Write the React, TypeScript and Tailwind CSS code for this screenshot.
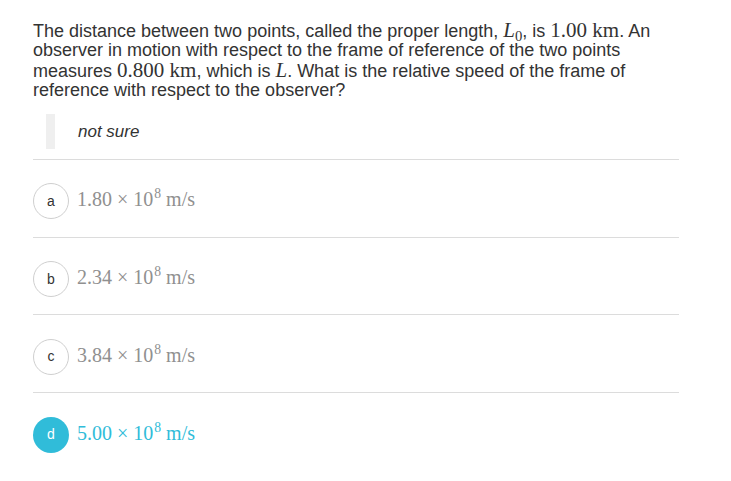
import React from "react";

const serif = "font-['Liberation_Serif','DejaVu_Serif',serif]";

function Sup({ children }: { children: React.ReactNode }) {
  return <sup className="relative -top-[0.6em] ml-[1px] align-baseline text-[0.68em] leading-none">{children}</sup>;
}

function Speed({ value }: { value: string }) {
  return (
    <span className={`${serif} text-[20px] leading-none`}>
      {value}
      <span className="mx-[5px]">×</span>
      10
      <Sup>8</Sup>
      <span className="ml-[5px]">m/s</span>
    </span>
  );
}

const options = [
  { key: "a", value: "1.80", selected: false },
  { key: "b", value: "2.34", selected: false },
  { key: "c", value: "3.84", selected: false },
  { key: "d", value: "5.00", selected: true },
];

export default function App() {
  return (
    <div className="min-h-screen bg-white font-['Liberation_Sans',Arial,sans-serif] text-[#333]">
      <div className="w-[646px] pl-[33px] pt-[20px] box-content">
        <p className="text-[18px] leading-[19px]">
          The distance between two points, called the proper length,{" "}
          <span className={`${serif} text-[21px] leading-none`}>
            <i>L</i>
            <sub className="text-[0.7em]">0</sub>
          </span>
          , is <span className={`${serif} text-[21px] leading-none`}>1.00 km</span>. An observer in motion with
          respect to the frame of reference of the two points measures{" "}
          <span className={`${serif} text-[21px] leading-none`}>0.800 km</span>, which is{" "}
          <span className={`${serif} text-[21px] leading-none italic`}>L</span>. What is the relative speed of the
          frame of reference with respect to the observer?
        </p>

        <div className="mt-[14px] flex items-center pl-[13px] pb-[10px] border-b border-[#dcdcdc]">
          <div className="w-[9px] h-[35px] bg-[#efefef]" />
          <span className="ml-[23px] text-[17px] italic text-[#333]">not sure</span>
        </div>

        {options.map((o, i) => (
          <div
            key={o.key}
            className={`flex items-center h-[77.7px] pt-[6px] ${i < options.length - 1 ? "border-b border-[#dcdcdc]" : ""}`}
          >
            <div
              className={`flex items-center justify-center w-[36px] h-[36px] rounded-full text-[14px] ${
                o.selected ? "bg-[#30bcd9] text-white" : "border border-[#cfcfcf] text-[#333]"
              }`}
            >
              {o.key}
            </div>
            <div className={`ml-[8px] ${o.selected ? "text-[#30bcd9]" : "text-[#909090]"}`}>
              <Speed value={o.value} />
            </div>
          </div>
        ))}
      </div>
    </div>
  );
}
